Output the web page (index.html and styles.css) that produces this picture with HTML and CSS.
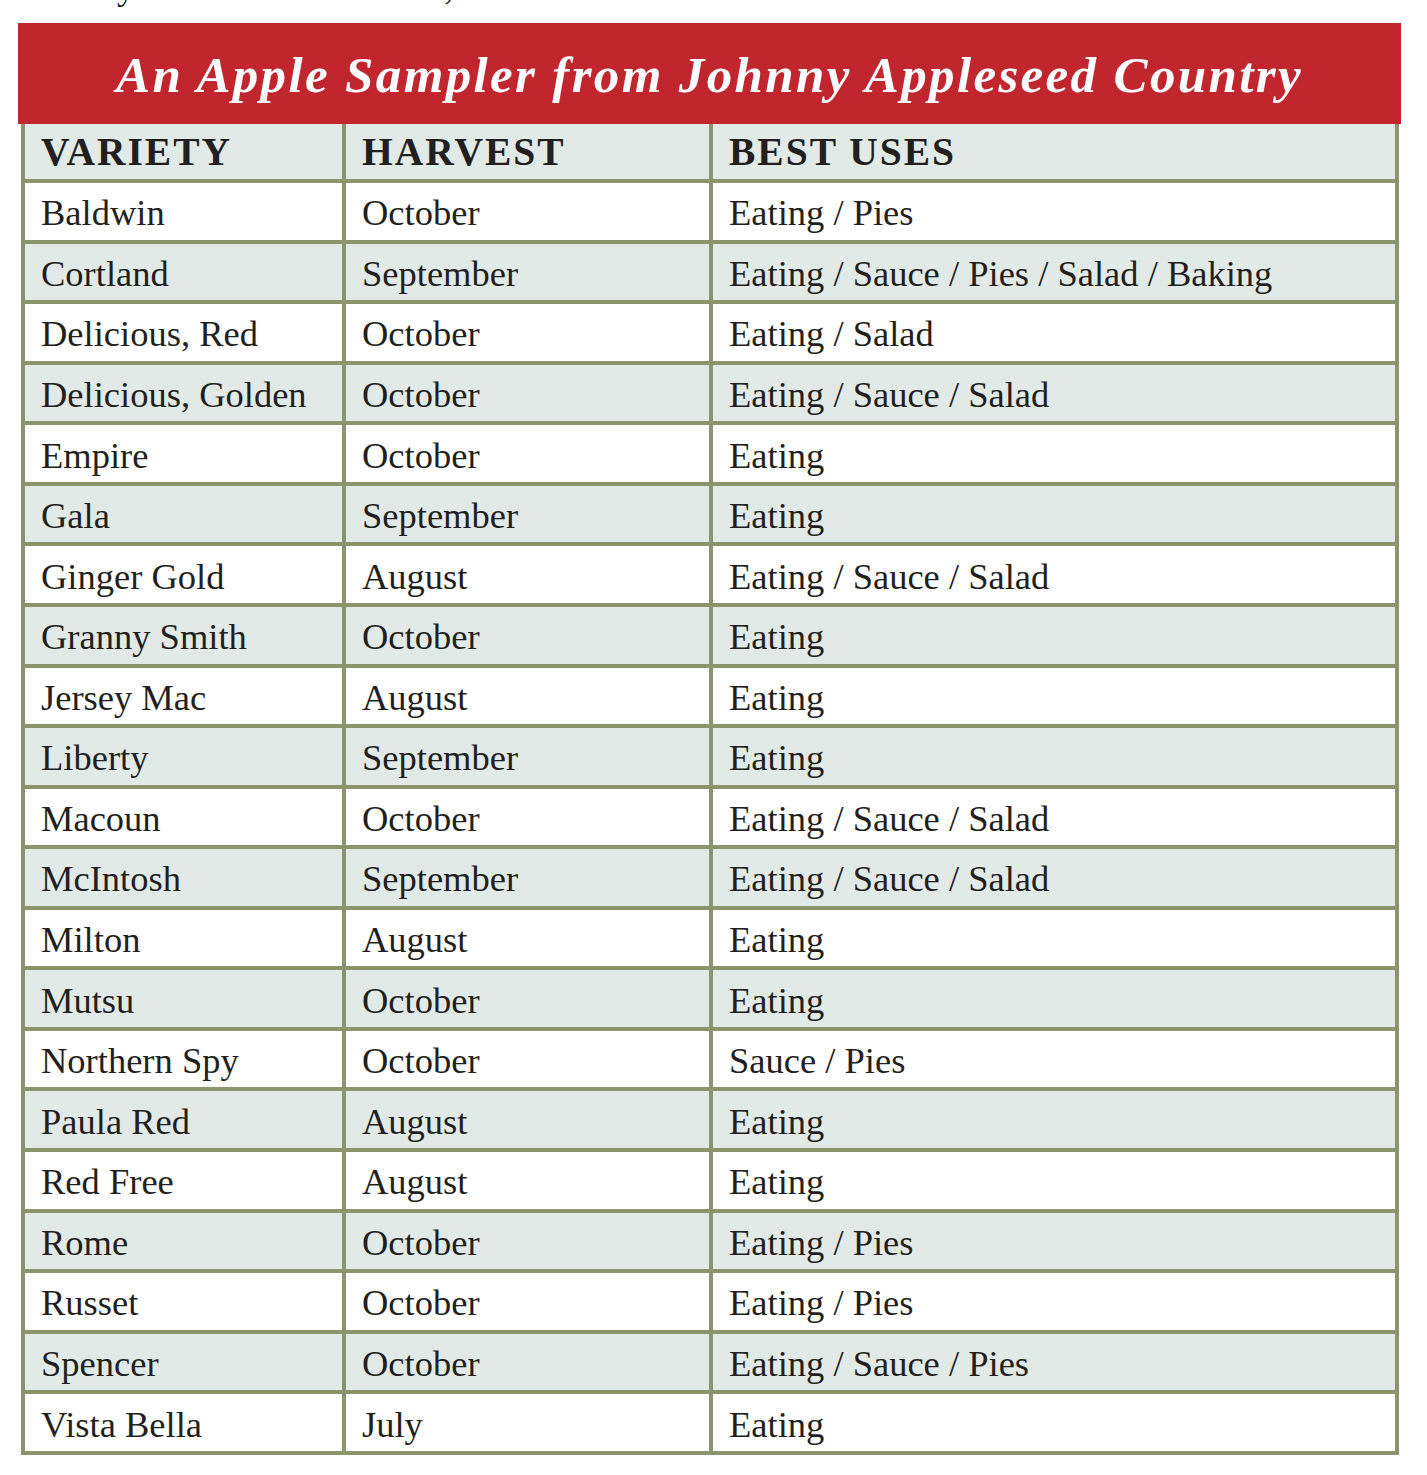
FILE: index.html
```html
<!DOCTYPE html>
<html lang="en">
<head>
<meta charset="utf-8">
<title>An Apple Sampler from Johnny Appleseed Country</title>
<link rel="stylesheet" href="styles.css">
</head>
<body>
<div class="lead"><p>Many of these old ones are, even the ones listed below</p></div>
<section class="sampler">
  <h1 class="banner">An Apple Sampler from Johnny Appleseed Country</h1>
  <div class="grid">
    <div class="row head"><div class="cell">VARIETY</div><div class="cell">HARVEST</div><div class="cell">BEST USES</div></div>
    <div class="row"><div class="cell">Baldwin</div><div class="cell">October</div><div class="cell">Eating / Pies</div></div>
    <div class="row alt"><div class="cell">Cortland</div><div class="cell">September</div><div class="cell">Eating / Sauce / Pies / Salad / Baking</div></div>
    <div class="row"><div class="cell">Delicious, Red</div><div class="cell">October</div><div class="cell">Eating / Salad</div></div>
    <div class="row alt"><div class="cell">Delicious, Golden</div><div class="cell">October</div><div class="cell">Eating / Sauce / Salad</div></div>
    <div class="row"><div class="cell">Empire</div><div class="cell">October</div><div class="cell">Eating</div></div>
    <div class="row alt"><div class="cell">Gala</div><div class="cell">September</div><div class="cell">Eating</div></div>
    <div class="row"><div class="cell">Ginger Gold</div><div class="cell">August</div><div class="cell">Eating / Sauce / Salad</div></div>
    <div class="row alt"><div class="cell">Granny Smith</div><div class="cell">October</div><div class="cell">Eating</div></div>
    <div class="row"><div class="cell">Jersey Mac</div><div class="cell">August</div><div class="cell">Eating</div></div>
    <div class="row alt"><div class="cell">Liberty</div><div class="cell">September</div><div class="cell">Eating</div></div>
    <div class="row"><div class="cell">Macoun</div><div class="cell">October</div><div class="cell">Eating / Sauce / Salad</div></div>
    <div class="row alt"><div class="cell">McIntosh</div><div class="cell">September</div><div class="cell">Eating / Sauce / Salad</div></div>
    <div class="row"><div class="cell">Milton</div><div class="cell">August</div><div class="cell">Eating</div></div>
    <div class="row alt"><div class="cell">Mutsu</div><div class="cell">October</div><div class="cell">Eating</div></div>
    <div class="row"><div class="cell">Northern Spy</div><div class="cell">October</div><div class="cell">Sauce / Pies</div></div>
    <div class="row alt"><div class="cell">Paula Red</div><div class="cell">August</div><div class="cell">Eating</div></div>
    <div class="row"><div class="cell">Red Free</div><div class="cell">August</div><div class="cell">Eating</div></div>
    <div class="row alt"><div class="cell">Rome</div><div class="cell">October</div><div class="cell">Eating / Pies</div></div>
    <div class="row"><div class="cell">Russet</div><div class="cell">October</div><div class="cell">Eating / Pies</div></div>
    <div class="row alt"><div class="cell">Spencer</div><div class="cell">October</div><div class="cell">Eating / Sauce / Pies</div></div>
    <div class="row"><div class="cell">Vista Bella</div><div class="cell">July</div><div class="cell">Eating</div></div>
  </div>
</section>
</body>
</html>
```
FILE: styles.css
```css
html, body {
  margin: 0;
  padding: 0;
  background: #ffffff;
}

body {
  font-family: "Liberation Serif", "Times New Roman", serif;
  color: #231f20;
}

.lead {
  height: 23px;
  overflow: hidden;
}

.lead p {
  margin: -33px 0 0 0;
  padding-left: 50px;
  font-size: 36.5px;
  line-height: 40px;
  white-space: nowrap;
}

.sampler {
  width: 1383px;
  margin-left: 18px;
}

.banner {
  margin: 0;
  height: 101px;
  padding-top: 3px;
  box-sizing: border-box;
  background: #c1262f;
  color: #ffffff;
  font-family: "Liberation Serif", "Times New Roman", serif;
  font-style: italic;
  font-weight: bold;
  font-size: 51px;
  letter-spacing: 2.35px;
  line-height: 98px;
  text-align: center;
  white-space: nowrap;
}

.grid {
  width: 1378px;
  margin-left: 3px;
  display: flex;
  flex-direction: column;
  gap: 4px;
  padding-bottom: 4px;
  background: #8b946d;
}

.row {
  display: grid;
  grid-template-columns: 317px 363px 682px;
  column-gap: 4px;
  padding: 0 4px;
  height: 56.57px;
}

.row.head {
  height: 55px;
}

.cell {
  background: #ffffff;
  display: flex;
  align-items: center;
  padding: 3px 0 0 16px;
  box-sizing: border-box;
  font-size: 36.5px;
  white-space: nowrap;
}

.row.alt .cell,
.row.head .cell {
  background: #e2eae7;
}

.row.head .cell {
  padding-top: 0;
  font-size: 39.5px;
  font-weight: bold;
  letter-spacing: 2px;
}
```
